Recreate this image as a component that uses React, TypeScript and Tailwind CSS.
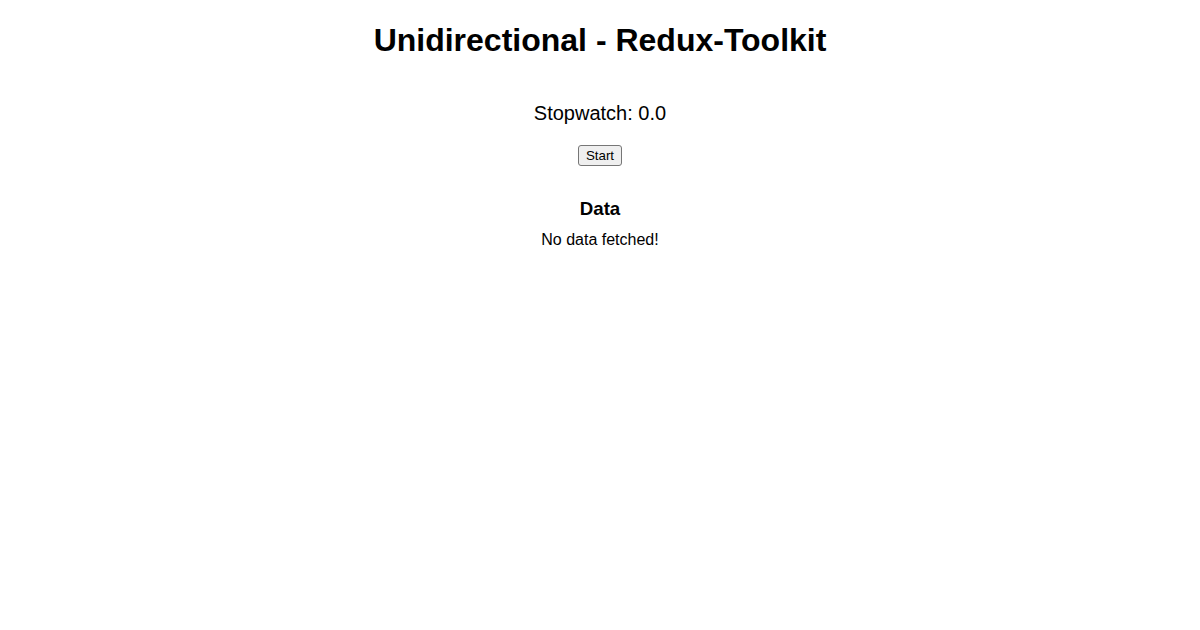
export default function App() {
  return (
    <div className="min-h-screen bg-white text-black text-center font-['Liberation_Sans',Arial,sans-serif]">
      <h1 className="pt-[22px] text-[32px] leading-[37px] font-bold">Unidirectional - Redux-Toolkit</h1>

      <div className="mt-[43px] text-[20px] leading-[23px]">Stopwatch: 0.0</div>

      <div className="mt-[18px]">
        <button className="h-[21px] px-[7px] border border-[#767676] rounded-[3px] bg-[#efefef] text-[13.33px] leading-[15px]">
          Start
        </button>
      </div>

      <h3 className="mt-[31px] text-[18.72px] leading-[22px] font-bold">Data</h3>
      <p className="mt-[11px] text-[16px] leading-[18px]">No data fetched!</p>
    </div>
  );
}
